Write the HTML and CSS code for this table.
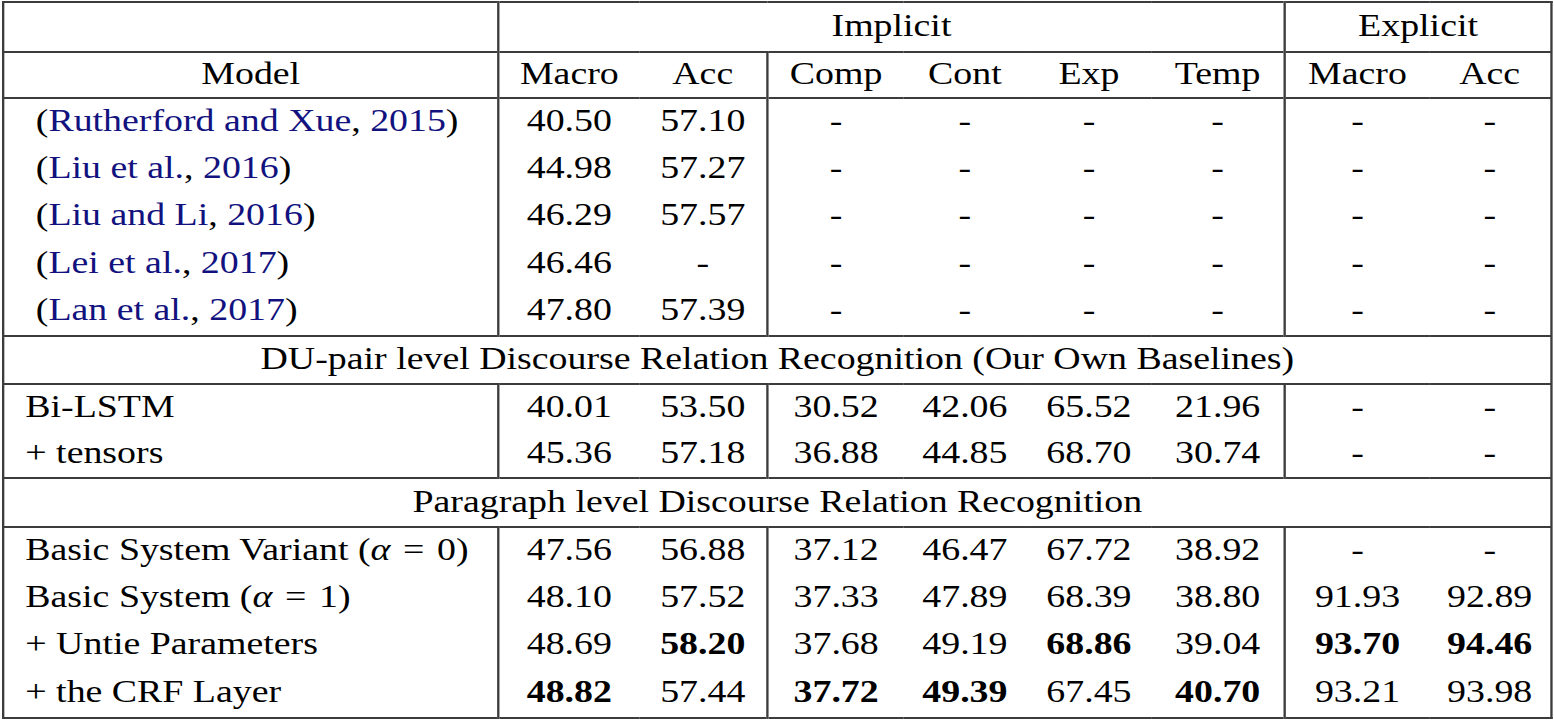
FILE: index.html
```html
<!DOCTYPE html>
<html lang="en">
<head>
<meta charset="utf-8">
<title>Results table</title>
<link rel="stylesheet" href="styles.css">
</head>
<body>
<div class="page">
<table class="results">
  <colgroup>
    <col class="c-model">
    <col class="c-imacro">
    <col class="c-iacc">
    <col class="c-comp">
    <col class="c-cont">
    <col class="c-exp">
    <col class="c-temp">
    <col class="c-emacro">
    <col class="c-eacc">
  </colgroup>
  <thead>
    <tr class="tall">
      <th class="vr"></th>
      <th colspan="6" class="vr">Implicit</th>
      <th colspan="2">Explicit</th>
    </tr>
    <tr class="rule short">
      <th class="vr">Model</th>
      <th>Macro</th>
      <th class="vr">Acc</th>
      <th>Comp</th>
      <th>Cont</th>
      <th>Exp</th>
      <th class="vr">Temp</th>
      <th>Macro</th>
      <th>Acc</th>
    </tr>
  </thead>
  <tbody>
    <tr class="rule tall">
      <td class="model cite vr">(<span class="ref">Rutherford and Xue</span>, <span class="ref">2015</span>)</td>
      <td>40.50</td><td class="vr">57.10</td>
      <td>-</td><td>-</td><td>-</td><td class="vr">-</td>
      <td>-</td><td>-</td>
    </tr>
    <tr>
      <td class="model cite vr">(<span class="ref">Liu et al.</span>, <span class="ref">2016</span>)</td>
      <td>44.98</td><td class="vr">57.27</td>
      <td>-</td><td>-</td><td>-</td><td class="vr">-</td>
      <td>-</td><td>-</td>
    </tr>
    <tr class="tall">
      <td class="model cite vr">(<span class="ref">Liu and Li</span>, <span class="ref">2016</span>)</td>
      <td>46.29</td><td class="vr">57.57</td>
      <td>-</td><td>-</td><td>-</td><td class="vr">-</td>
      <td>-</td><td>-</td>
    </tr>
    <tr>
      <td class="model cite vr">(<span class="ref">Lei et al.</span>, <span class="ref">2017</span>)</td>
      <td>46.46</td><td class="vr">-</td>
      <td>-</td><td>-</td><td>-</td><td class="vr">-</td>
      <td>-</td><td>-</td>
    </tr>
    <tr class="tall">
      <td class="model cite vr">(<span class="ref">Lan et al.</span>, <span class="ref">2017</span>)</td>
      <td>47.80</td><td class="vr">57.39</td>
      <td>-</td><td>-</td><td>-</td><td class="vr">-</td>
      <td>-</td><td>-</td>
    </tr>
    <tr class="rule tall">
      <td colspan="9" class="section">DU-pair level Discourse Relation Recognition (Our Own Baselines)</td>
    </tr>
    <tr class="rule">
      <td class="model vr">Bi-LSTM</td>
      <td>40.01</td><td class="vr">53.50</td>
      <td>30.52</td><td>42.06</td><td>65.52</td><td class="vr">21.96</td>
      <td>-</td><td>-</td>
    </tr>
    <tr>
      <td class="model vr">+ tensors</td>
      <td>45.36</td><td class="vr">57.18</td>
      <td>36.88</td><td>44.85</td><td>68.70</td><td class="vr">30.74</td>
      <td>-</td><td>-</td>
    </tr>
    <tr class="rule xtall">
      <td colspan="9" class="section">Paragraph level Discourse Relation Recognition</td>
    </tr>
    <tr class="rule tall">
      <td class="model vr">Basic System Variant (<span class="math"><i>α</i>&#8196;=&#8196;0</span>)</td>
      <td>47.56</td><td class="vr">56.88</td>
      <td>37.12</td><td>46.47</td><td>67.72</td><td class="vr">38.92</td>
      <td>-</td><td>-</td>
    </tr>
    <tr>
      <td class="model vr">Basic System (<span class="math"><i>α</i>&#8196;=&#8196;1</span>)</td>
      <td>48.10</td><td class="vr">57.52</td>
      <td>37.33</td><td>47.89</td><td>68.39</td><td class="vr">38.80</td>
      <td>91.93</td><td>92.89</td>
    </tr>
    <tr class="tall">
      <td class="model vr">+ Untie Parameters</td>
      <td>48.69</td><td class="vr best">58.20</td>
      <td>37.68</td><td>49.19</td><td class="best">68.86</td><td class="vr">39.04</td>
      <td class="best">93.70</td><td class="best">94.46</td>
    </tr>
    <tr class="tall">
      <td class="model vr">+ the CRF Layer</td>
      <td class="best">48.82</td><td class="vr">57.44</td>
      <td class="best">37.72</td><td class="best">49.39</td><td>67.45</td><td class="vr best">40.70</td>
      <td>93.21</td><td>93.98</td>
    </tr>
  </tbody>
</table>
</div>
</body>
</html>
```

FILE: styles.css
```css
html, body {
  margin: 0;
  padding: 0;
  background: #ffffff;
}

.page {
  padding: 1px 0 0 2px;
}

.results {
  font-family: "Liberation Serif", "Times New Roman", serif;
  font-size: 32.5px;
  color: #000000;
  border-collapse: collapse;
  table-layout: fixed;
  width: 1329px;
  border: 2px solid #3c3c3c;
  transform: scaleX(1.165);
  transform-origin: 0 0;
}

.c-model { width: 425px; }
.c-imacro { width: 121px; }
.c-iacc { width: 110px; }
.c-comp { width: 117px; }
.c-cont { width: 105px; }
.c-exp { width: 108px; }
.c-temp { width: 114px; }
.c-emacro { width: 124px; }
.c-eacc { width: 105px; }

.results th,
.results td {
  height: 43px;
  padding: 0 0 4px 0;
  font-weight: normal;
  text-align: center;
  vertical-align: middle;
  white-space: nowrap;
  line-height: 36px;
}

.results tr.tall > th,
.results tr.tall > td {
  height: 44px;
}

.results tr.rule > th,
.results tr.rule > td {
  border-top: 2px solid #3c3c3c;
  height: 41px;
}

.results tr.rule.short > th,
.results tr.rule.short > td {
  height: 40px;
}

.results tr.rule.tall > th,
.results tr.rule.tall > td {
  height: 42px;
}

.results tr.rule.xtall > th,
.results tr.rule.xtall > td {
  height: 43px;
}

.results .vr {
  border-right: 2px solid #3c3c3c;
}

.results td.model {
  text-align: left;
  padding-left: 18px;
}

.results td.model.cite {
  padding-left: 27px;
}

.ref {
  color: #12127f;
}

.math i {
  font-style: italic;
}

.results td.best {
  font-weight: bold;
}

.results td.section {
  text-align: center;
}
```
